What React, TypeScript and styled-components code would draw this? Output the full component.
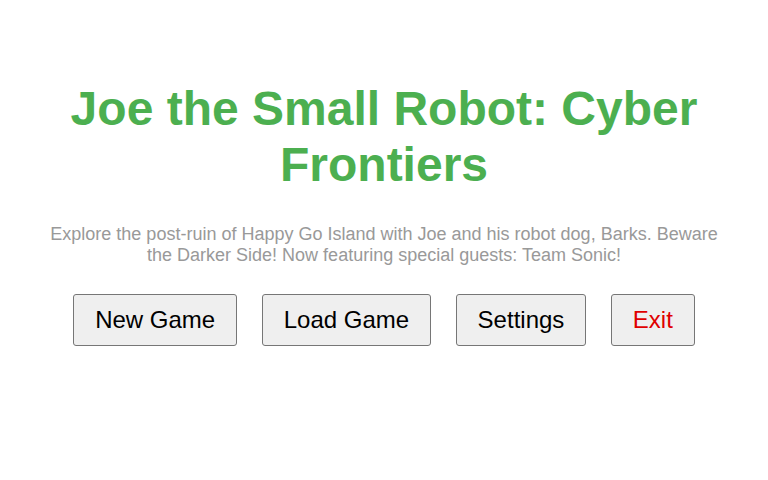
import React from "react";
import styled, { createGlobalStyle } from "styled-components";

const Global = createGlobalStyle`
  html, body { margin: 0; padding: 0; background: #ffffff; }
  body { font-family: "Liberation Sans", Arial, sans-serif; }
`;

const Screen = styled.main`
  display: flex;
  flex-direction: column;
  align-items: center;
  padding: 81px 40px 0;
  text-align: center;
`;

const Title = styled.h1`
  margin: 0;
  font-size: 48px;
  line-height: 56px;
  font-weight: bold;
  color: #4caf50;
  max-width: 660px;
`;

const Blurb = styled.p`
  margin: 31px 0 0;
  font-size: 18px;
  line-height: 21px;
  color: #999999;
  max-width: 690px;
`;

const Menu = styled.nav`
  display: flex;
  gap: 25px;
  margin-top: 28px;
`;

const MenuButton = styled.button<{ $danger?: boolean }>`
  font-family: "Liberation Sans", Arial, sans-serif;
  font-size: 24px;
  line-height: 28px;
  padding: 11px 20.75px;
  background: #efefef;
  color: ${(p) => (p.$danger ? "#e00000" : "#000000")};
  border: 1px solid #767676;
  border-radius: 3px;
  cursor: pointer;
`;

export default function App() {
  return (
    <>
      <Global />
      <Screen>
        <Title>Joe the Small Robot: Cyber Frontiers</Title>
        <Blurb>
          Explore the post-ruin of Happy Go Island with Joe and his robot dog,
          Barks. Beware the Darker Side! Now featuring special guests: Team
          Sonic!
        </Blurb>
        <Menu>
          <MenuButton>New Game</MenuButton>
          <MenuButton>Load Game</MenuButton>
          <MenuButton>Settings</MenuButton>
          <MenuButton $danger>Exit</MenuButton>
        </Menu>
      </Screen>
    </>
  );
}
